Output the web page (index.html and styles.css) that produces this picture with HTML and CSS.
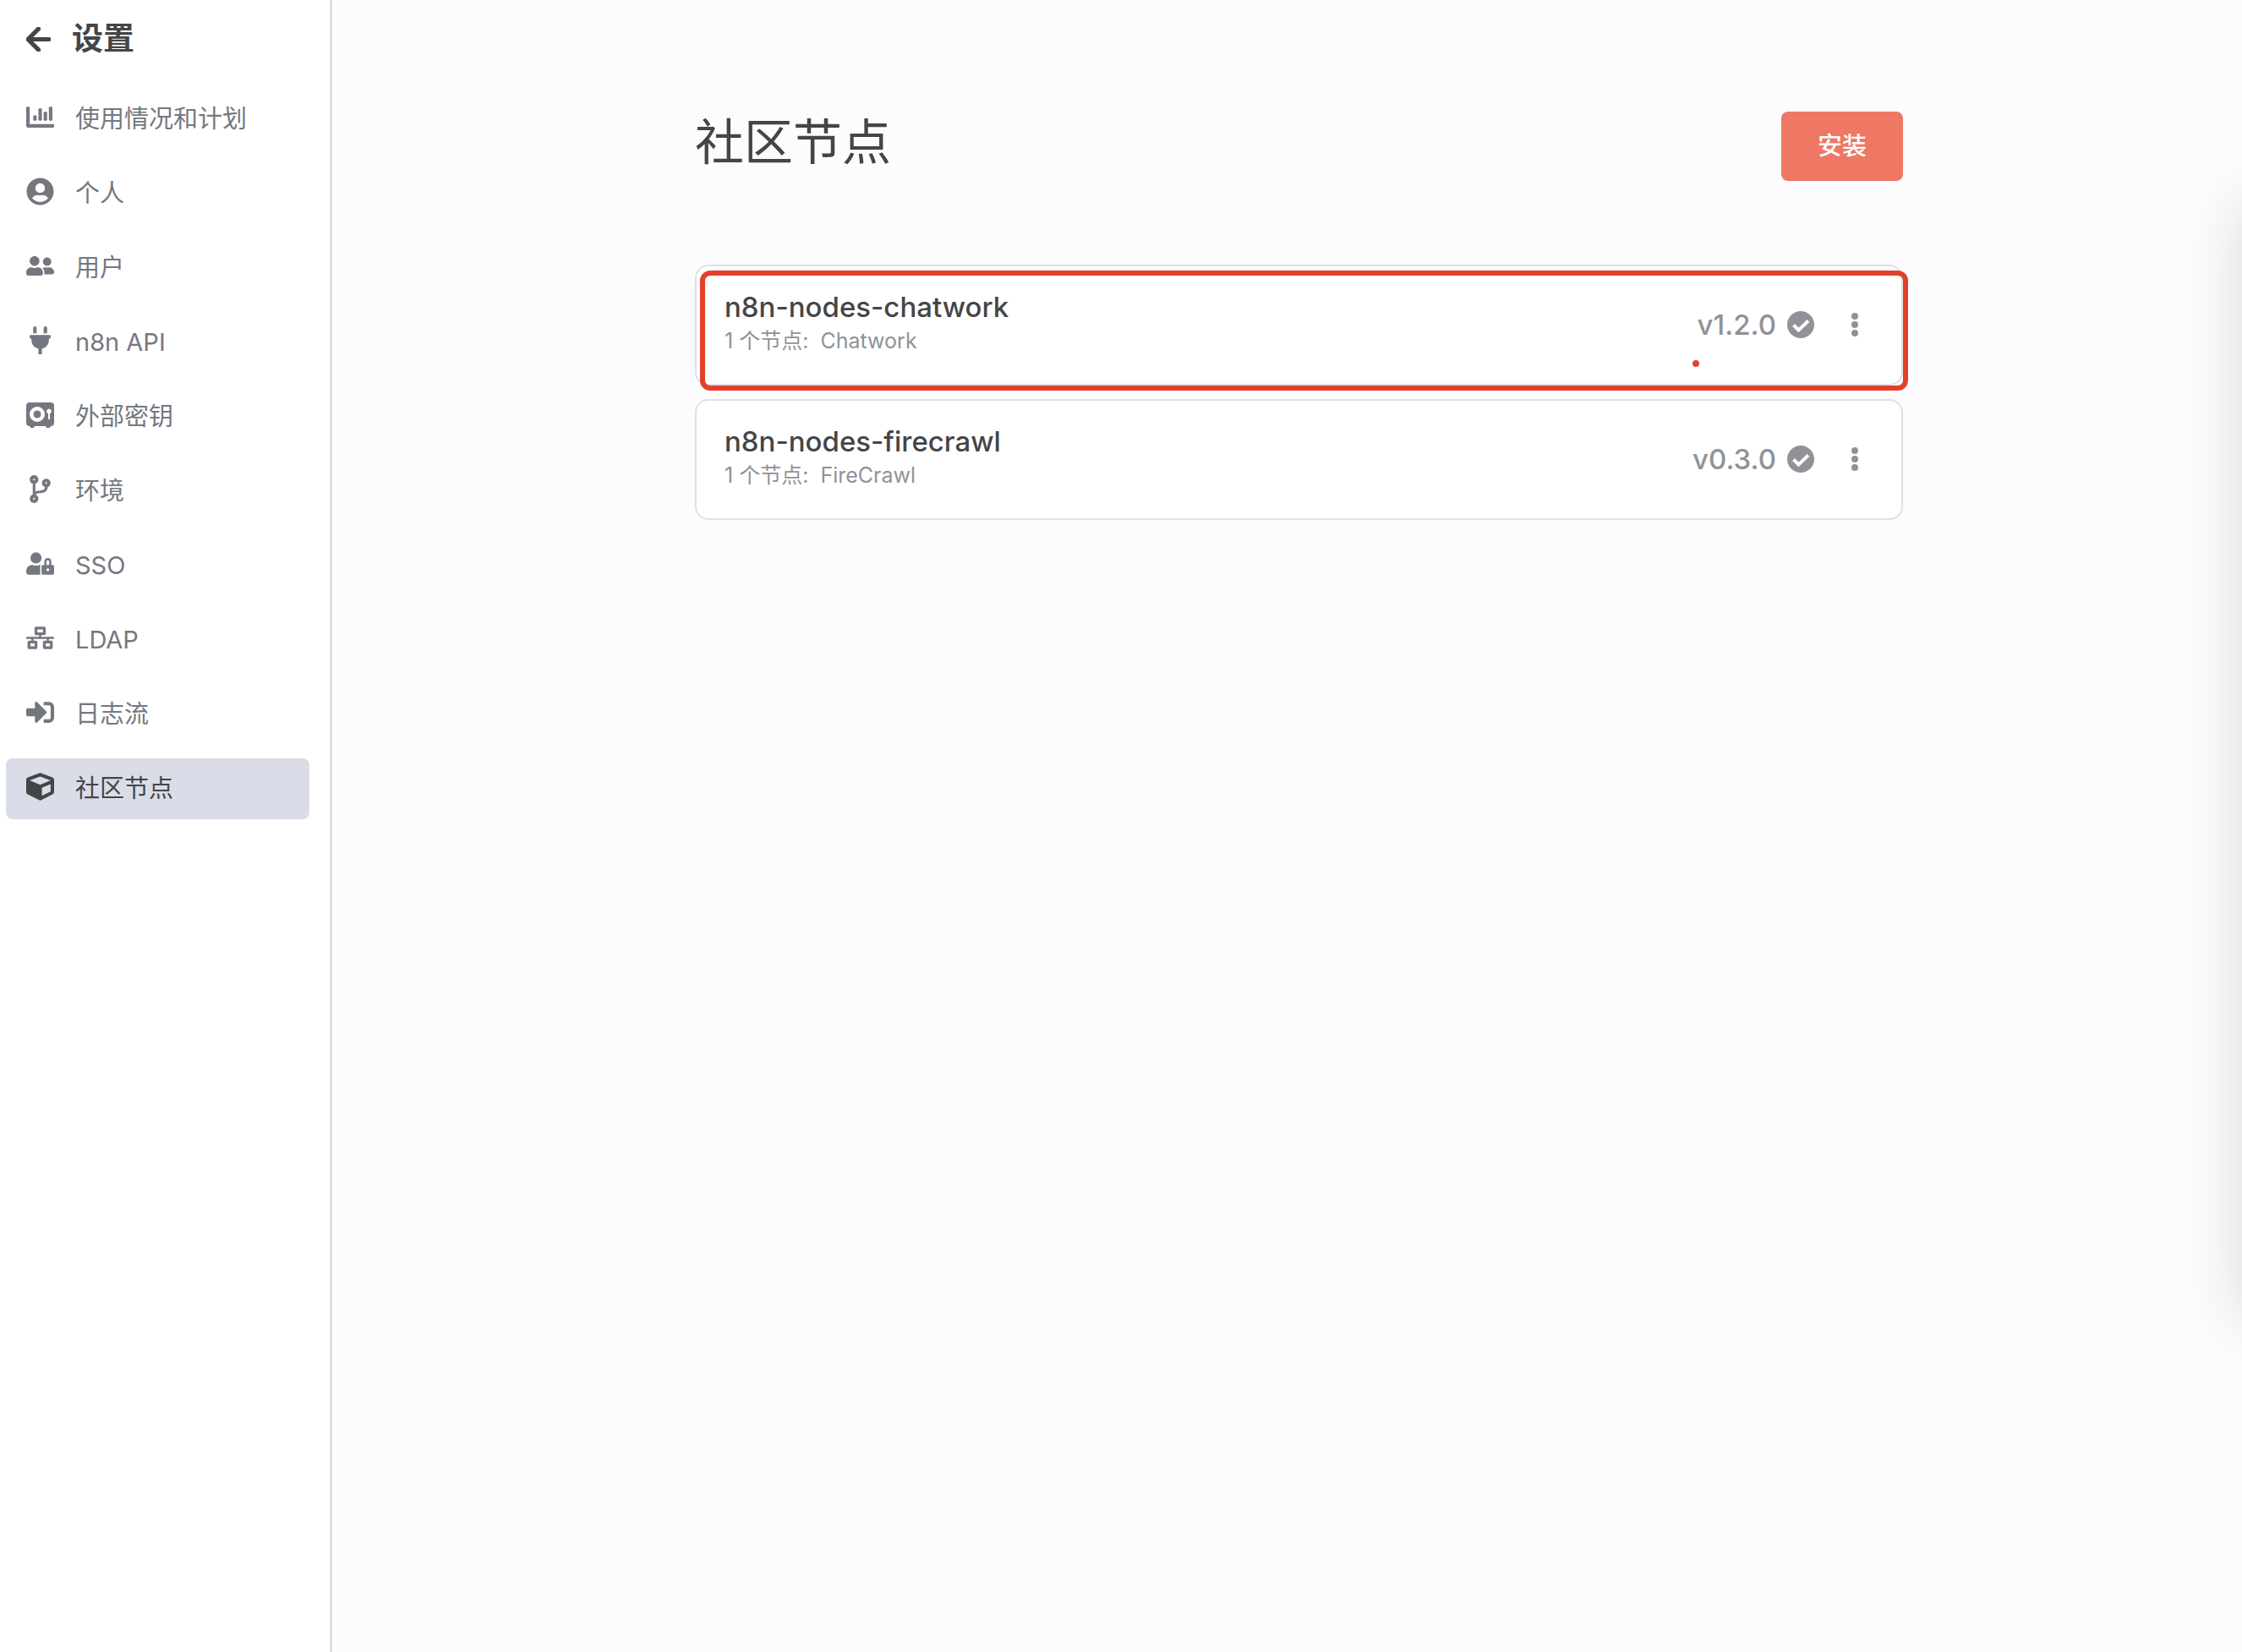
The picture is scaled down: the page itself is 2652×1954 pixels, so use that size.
FILE: index.html
```html
<!DOCTYPE html>
<html lang="zh-CN">
<head>
<meta charset="utf-8">
<meta name="viewport" content="width=device-width, initial-scale=1">
<title>社区节点</title>
<link rel="stylesheet" href="styles.css">
</head>
<body>
<div class="layout">
  <aside class="sidebar">
    <a class="back" href="#">
      <svg class="back-icon" viewBox="0 0 28 28" aria-hidden="true"><path d="M14 2 2 14l12 12M3 14h23" fill="none" stroke="currentColor" stroke-width="5" stroke-linecap="round" stroke-linejoin="round"/></svg>
      <span>设置</span>
    </a>
    <nav class="menu">
      <a class="item" href="#"><svg class="icon" viewBox="0 0 512 512" aria-hidden="true"><path d="M332.8 320h38.4c6.4 0 12.8-6.4 12.8-12.8V172.800c0-6.400-6.400-12.800-12.800-12.800h-38.400c-6.400 0-12.800 6.400-12.800 12.800v134.400c0 6.400 6.400 12.800 12.800 12.800zm96 0h38.400c6.400 0 12.800-6.400 12.800-12.800V76.800c0-6.400-6.400-12.800-12.800-12.800h-38.400c-6.400 0-12.800 6.400-12.800 12.800v230.400c0 6.400 6.400 12.800 12.800 12.800zm-288 0h38.400c6.400 0 12.800-6.400 12.800-12.800v-70.400c0-6.400-6.400-12.800-12.800-12.800h-38.400c-6.400 0-12.800 6.400-12.800 12.800v70.400c0 6.400 6.400 12.800 12.800 12.800zm96 0h38.400c6.400 0 12.800-6.400 12.800-12.800V108.800c0-6.400-6.400-12.800-12.800-12.800h-38.400c-6.400 0-12.800 6.400-12.800 12.800v198.400c0 6.400 6.400 12.800 12.800 12.800zM496 384H64V80c0-8.840-7.160-16-16-16H16C7.160 64 0 71.160 0 80v336c0 17.670 14.330 32 32 32h464c8.840 0 16-7.160 16-16v-32c0-8.840-7.160-16-16-16z"/></svg><span>使用情况和计划</span></a>
      <a class="item" href="#"><svg class="icon" viewBox="0 0 496 512" aria-hidden="true"><path d="M248 8C111 8 0 119 0 256s111 248 248 248 248-111 248-248S385 8 248 8zm0 96c48.600 0 88 39.400 88 88s-39.400 88-88 88-88-39.400-88-88 39.400-88 88-88zm0 344c-58.700 0-111.300-26.600-146.500-68.200 18.800-35.400 55.600-59.800 98.500-59.800 2.400 0 4.800.4 7.100 1.100 13 4.200 26.600 6.900 40.900 6.900 14.300 0 28-2.700 40.900-6.900 2.300-.7 4.700-1.100 7.100-1.100 42.900 0 79.700 24.400 98.500 59.800C359.300 421.400 306.700 448 248 448z"/></svg><span>个人</span></a>
      <a class="item" href="#"><svg class="icon" viewBox="0 0 640 512" aria-hidden="true"><path d="M192 256c61.900 0 112-50.100 112-112S253.900 32 192 32 80 82.100 80 144s50.100 112 112 112zm76.800 32h-8.300c-20.800 10-43.900 16-68.500 16s-47.600-6-68.500-16h-8.300C51.600 288 0 339.600 0 403.200V432c0 26.500 21.500 48 48 48h288c26.500 0 48-21.500 48-48v-28.800c0-63.600-51.600-115.200-115.200-115.200zM480 256c53 0 96-43 96-96s-43-96-96-96-96 43-96 96 43 96 96 96zm48 32h-3.800c-13.900 4.800-28.600 8-44.200 8s-30.300-3.200-44.200-8H432c-20.400 0-39.200 5.900-55.700 15.400 24.400 26.300 39.700 61.200 39.700 99.800v38.400c0 2.200-.5 4.300-.6 6.400H592c26.500 0 48-21.500 48-48 0-61.900-50.100-112-112-112z"/></svg><span>用户</span></a>
      <a class="item" href="#"><svg class="icon" viewBox="0 0 384 512" aria-hidden="true"><path d="M320 32a32 32 0 0 0-64 0v96h64zm48 128H16A16 16 0 0 0 0 176v32a16 16 0 0 0 16 16h16v32a160.070 160.070 0 0 0 128 156.800V512h64v-99.200A160.070 160.070 0 0 0 352 256v-32h16a16 16 0 0 0 16-16v-32a16 16 0 0 0-16-16zM128 32a32 32 0 0 0-64 0v96h64z"/></svg><span>n8n API</span></a>
      <a class="item" href="#"><svg class="icon" viewBox="0 0 33 33" aria-hidden="true"><path fill-rule="evenodd" d="M4 2h25a4 4 0 0 1 4 4v20a4 4 0 0 1-4 4l-1 2h-4l-1-2H10l-1 2H5l-1-2a4 4 0 0 1-4-4V6a4 4 0 0 1 4-4zm9 5a9 9 0 1 0 0 18 9 9 0 0 0 0-18zm0 4.500a4.500 4.500 0 1 1 0 9 4.500 4.500 0 0 1 0-9zM27 9.500a3 3 0 0 0-1 5.800V22h2v-6.700a3 3 0 0 0-1-5.800z"/></svg><span>外部密钥</span></a>
      <a class="item" href="#"><svg class="icon" viewBox="0 0 384 512" aria-hidden="true"><path d="M384 144c0-44.200-35.800-80-80-80s-80 35.800-80 80c0 36.400 24.300 67.100 57.500 76.800-.6 16.100-4.200 28.500-11 36.900-15.400 19.200-49.300 22.400-85.200 25.700-28.200 2.600-57.400 5.400-81.300 16.900v-144c32.500-10.200 56-40.500 56-76.300 0-44.200-35.800-80-80-80S0 35.800 0 80c0 35.800 23.500 66.100 56 76.300v199.300C23.500 365.900 0 396.200 0 432c0 44.200 35.800 80 80 80s80-35.800 80-80c0-34-21.200-63.100-51.200-74.600 3.100-5.200 7.800-9.800 14.900-13.400 16.200-8.200 40.400-10.400 66.100-12.800 42.200-3.900 90-8.400 118.200-43.400 14-17.400 21.100-39.800 21.600-67.900 31.600-10.800 54.400-40.700 54.400-75.900zM80 64c8.800 0 16 7.200 16 16s-7.200 16-16 16-16-7.200-16-16 7.200-16 16-16zm0 384c-8.800 0-16-7.200-16-16s7.200-16 16-16 16 7.200 16 16-7.200 16-16 16zm224-320c8.800 0 16 7.200 16 16s-7.200 16-16 16-16-7.200-16-16 7.200-16 16-16z"/></svg><span>环境</span></a>
      <a class="item" href="#"><svg class="icon" viewBox="0 0 640 512" aria-hidden="true"><path d="M224 256A128 128 0 1 0 96 128a128 128 0 0 0 128 128zm96 64a63.080 63.080 0 0 1 8.100-30.500c-4.800-.5-9.500-1.500-14.500-1.500h-16.700a174.080 174.080 0 0 1-145.800 0h-16.700A134.430 134.430 0 0 0 0 422.400V464a48 48 0 0 0 48 48h280.900a63.540 63.540 0 0 1-8.900-32zm288-32h-32v-80a80 80 0 0 0-160 0v80h-32a32 32 0 0 0-32 32v160a32 32 0 0 0 32 32h224a32 32 0 0 0 32-32V320a32 32 0 0 0-32-32zM496 432a32 32 0 1 1 32-32 32 32 0 0 1-32 32zm32-144h-64v-80a32 32 0 0 1 64 0z"/></svg><span>SSO</span></a>
      <a class="item" href="#"><svg class="icon" viewBox="0 0 640 512" aria-hidden="true"><path d="M640 264v-16c0-8.840-7.160-16-16-16H344v-40h72c17.670 0 32-14.330 32-32V32c0-17.670-14.330-32-32-32H224c-17.670 0-32 14.330-32 32v128c0 17.670 14.330 32 32 32h72v40H16c-8.840 0-16 7.160-16 16v16c0 8.840 7.160 16 16 16h104v40H64c-17.670 0-32 14.330-32 32v128c0 17.670 14.330 32 32 32h160c17.670 0 32-14.330 32-32V352c0-17.670-14.330-32-32-32h-56v-40h304v40h-56c-17.670 0-32 14.330-32 32v128c0 17.670 14.330 32 32 32h160c17.670 0 32-14.330 32-32V352c0-17.670-14.330-32-32-32h-56v-40h104c8.840 0 16-7.160 16-16zM256 128V64h128v64H256zm-64 320H96v-64h96v64zm352 0h-96v-64h96v64z"/></svg><span>LDAP</span></a>
      <a class="item" href="#"><svg class="icon" viewBox="0 0 512 512" aria-hidden="true"><path d="M416 448h-84c-6.600 0-12-5.400-12-12v-40c0-6.600 5.400-12 12-12h84c17.700 0 32-14.300 32-32V160c0-17.700-14.300-32-32-32h-84c-6.600 0-12-5.400-12-12V76c0-6.600 5.400-12 12-12h84c53 0 96 43 96 96v192c0 53-43 96-96 96zm-47-209L201 71c-15-15-41-4.500-41 17v96H24c-13.300 0-24 10.700-24 24v96c0 13.300 10.700 24 24 24h136v96c0 21.500 26 32 41 17l168-168c9.300-9.400 9.300-24.600 0-34z"/></svg><span>日志流</span></a>
      <a class="item active" href="#" aria-current="page"><svg class="icon" viewBox="0 0 512 512" aria-hidden="true"><path d="M239.100 6.300l-208 78c-18.700 7-31.100 25-31.100 45v225.100c0 18.200 10.300 34.800 26.500 42.900l208 104c13.500 6.800 29.400 6.800 42.900 0l208-104c16.300-8.100 26.500-24.800 26.500-42.900V129.300c0-20-12.400-37.900-31.100-44.900l-208-78C262 2.200 250 2.200 239.100 6.300zM256 68.400l192 72v1.100l-192 78-192-78v-1.100l192-72zm32 356V275.500l160-65v133.900l-160 80z"/></svg><span>社区节点</span></a>
    </nav>
  </aside>
  <main class="main">
    <div class="content">
      <header class="header">
        <h1 class="title">社区节点</h1>
        <button class="install" type="button">安装</button>
      </header>
      <ul class="cards">
        <li class="card marked">
          <div class="info">
            <h2 class="name">n8n-nodes-chatwork</h2>
            <p class="nodes">1 个节点:&nbsp; Chatwork</p>
          </div>
          <span class="version">v1.2.0</span>
          <svg class="check" viewBox="0 0 32 32" aria-hidden="true"><circle cx="16" cy="16" r="16"/><path d="m7.500 16.500 6 6L25 11.500" fill="none" stroke="#fff" stroke-width="4"/></svg>
          <button class="more" type="button" aria-label="更多"><svg class="dots" viewBox="0 0 8 28" aria-hidden="true"><circle cx="4" cy="4" r="4"/><circle cx="4" cy="14" r="4"/><circle cx="4" cy="24" r="4"/></svg></button>
          <i class="pen-dot"></i>
        </li>
        <li class="card">
          <div class="info">
            <h2 class="name">n8n-nodes-firecrawl</h2>
            <p class="nodes">1 个节点:&nbsp; FireCrawl</p>
          </div>
          <span class="version">v0.3.0</span>
          <svg class="check" viewBox="0 0 32 32" aria-hidden="true"><circle cx="16" cy="16" r="16"/><path d="m7.500 16.500 6 6L25 11.500" fill="none" stroke="#fff" stroke-width="4"/></svg>
          <button class="more" type="button" aria-label="更多"><svg class="dots" viewBox="0 0 8 28" aria-hidden="true"><circle cx="4" cy="4" r="4"/><circle cx="4" cy="14" r="4"/><circle cx="4" cy="24" r="4"/></svg></button>
        </li>
      </ul>
    </div>
    <div class="panel-shadow"></div>
  </main>
</div>
</body>
</html>
```
FILE: styles.css
```css
* { box-sizing: border-box; }

body {
  margin: 0;
  background: #fcfcff;
  color: #444547;
  font-family: Inter, "Noto Sans CJK SC", sans-serif;
  font-size: 29px;
  line-height: 40px;
}

h1, h2, p, ul { margin: 0; padding: 0; }
ul { list-style: none; }
a { color: inherit; text-decoration: none; }
button { font: inherit; border: 0; padding: 0; cursor: pointer; }
svg { display: block; fill: currentColor; flex: none; }

.layout {
  display: grid;
  grid-template-columns: 393px 1fr;
  min-height: 100vh;
}

.sidebar {
  background: #fff;
  border-right: 3px solid #dfe0e9;
  padding: 16px 24px 16px 7px;
}

.back {
  display: flex;
  align-items: center;
  gap: 25px;
  padding-left: 24px;
  height: 60px;
  font-size: 37px;
  font-weight: 600;
}
.back-icon { width: 29px; height: 29px; }

.menu {
  display: flex;
  flex-direction: column;
  gap: 16px;
  margin-top: 29px;
}
.item {
  display: flex;
  align-items: center;
  gap: 25px;
  height: 72px;
  padding: 0 24px;
  border-radius: 8px;
  color: #757780;
}
.icon { width: 33px; height: 33px; margin-bottom: 5px; }
.active { background: #dadde7; color: #444547; }

.main {
  position: relative;
  overflow: hidden;
  padding: 132px 32px 64px 60px;
}
.content {
  max-width: 1429px;
  margin: 0 auto;
}

.header {
  display: flex;
  justify-content: space-between;
  align-items: flex-start;
}
.title {
  font-size: 58px;
  font-weight: 400;
  line-height: 72px;
}
.install {
  width: 144px;
  height: 82px;
  border-radius: 8px;
  background: #ee7864;
  color: #fff;
  font-weight: 500;
}

.cards {
  display: flex;
  flex-direction: column;
  gap: 16px;
  margin-top: 99px;
}
.card {
  position: relative;
  display: flex;
  align-items: center;
  min-height: 143px;
  padding: 0 39px 2px 33px;
  border: 2px solid #dfe0e8;
  border-radius: 16px;
  background: #fff;
}
.info { flex: 1; align-self: flex-start; padding-top: 28px; }
.name { font-size: 33px; font-weight: 500; line-height: 40px; }
.nodes { font-size: 25px; line-height: 40px; color: #909298; }
.version { font-size: 33px; font-weight: 500; color: #909298; }
.check { width: 32px; height: 32px; margin: 0 32px 0 13px; color: #909298; }
.more {
  display: flex;
  justify-content: center;
  width: 32px;
  background: none;
  color: #909298;
}
.dots { width: 8px; height: 28px; }

/* Hand-drawn highlight over the first card */
.marked::after {
  content: "";
  position: absolute;
  inset: 5px -8px -8px 4px;
  border: 6px solid #e3402b;
  border-radius: 12px;
  pointer-events: none;
}
.pen-dot {
  position: absolute;
  right: 239px;
  bottom: 20px;
  width: 8px;
  height: 8px;
  border-radius: 50%;
  background: #dc4430;
}

/* Shadow of the panel parked beyond the right edge */
.panel-shadow {
  position: absolute;
  left: 100%;
  top: 240px;
  width: 100px;
  height: 1320px;
  box-shadow: 0 0 76px rgba(0, 0, 0, 0.14);
}
```
